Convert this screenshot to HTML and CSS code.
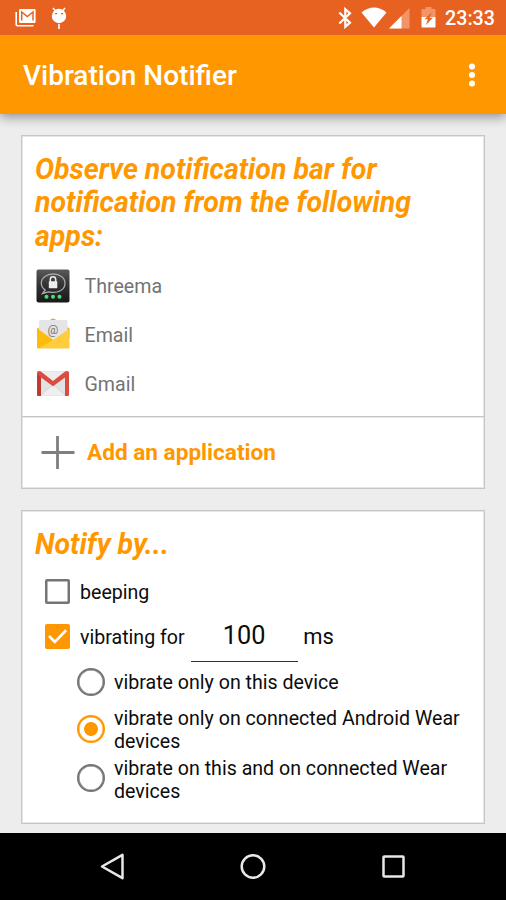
FILE: index.html
```html
<!DOCTYPE html>
<html lang="en">
<head>
<meta charset="utf-8">
<title>Vibration Notifier</title>
<link rel="stylesheet" href="styles.css">
</head>
<body>
<div class="screen">
  <header class="status">
    <svg class="notif-gmail" width="22" height="20" viewBox="0 0 22 20"><path d="M1.200 4v12.500q0 1.300 1.300 1.300H18.500" fill="none" stroke="#fff" stroke-width="1.600"/><rect x="4" y="1" width="16.600" height="14" rx="1.300" fill="#fff"/><path d="M6.700 12.500V4l5.600 4.500L18 4v8.500" fill="none" stroke="#e76120" stroke-width="1.500"/></svg>
    <svg class="notif-droid" width="16" height="23" viewBox="0 0 16 23"><circle cx="8" cy="9" r="7.200" fill="#fff"/><path d="M2 1l2.500 3M14 1l-2.500 3M8 17v5" stroke="#fff" stroke-width="1.600"/><path d="M4 6.700h2.200M10 6.700h2.200" stroke="#e76120" stroke-width="1.300"/></svg>
    <span class="spacer"></span>
    <svg class="bluetooth" width="14" height="22" viewBox="0 0 14 22"><path d="M1.300 5.500L12 15.700l-4.700 4.100V2.200L12 6.300 1.300 16.500" fill="none" stroke="#fff" stroke-width="2.200"/></svg>
    <svg class="wifi" width="26" height="21" viewBox="0 0 26 21"><path d="M0.500 5.500Q13-4.500 25.500 5.500L13 20.500Z" fill="#fff"/></svg>
    <svg class="signal" width="21" height="21" viewBox="0 0 21 21"><path d="M0 20.500L20.500 0v20.500Z" fill="#f19568"/><path d="M0 20.500L12.500 8v12.500Z" fill="#fff"/></svg>
    <svg class="battery" width="15" height="21" viewBox="0 0 15 21"><path d="M1.500 2h3V0h6v2h3q1 0 1 1v7H.5V3q0-1 1-1Z" fill="#f19568"/><path d="M.5 10h14v9.500q0 1-1 1h-12q-1 0-1-1Z" fill="#fff"/><path d="M11 5L3.700 12.200h3.200L5 18l6.800-7.200H8.500Z" fill="#e76120"/></svg>
    <time class="clock">23:33</time>
  </header>
  <div class="appbar">
    <h1>Vibration Notifier</h1>
    <svg width="8" height="24" viewBox="0 0 8 24" fill="#fff"><circle cx="4" cy="3.500" r="3"/><circle cx="4" cy="12" r="3"/><circle cx="4" cy="20.500" r="3"/></svg>
  </div>
  <main>
    <section class="card apps">
      <h2>Observe notification bar for notification from the following apps:</h2>
      <ul>
        <li><svg width="34" height="34" viewBox="0 0 34 34"><defs><linearGradient id="dark" x2="0" y2="1"><stop stop-color="#5a5a5a"/><stop offset=".45" stop-color="#343434"/><stop offset="1" stop-color="#181818"/></linearGradient></defs><rect x=".5" y=".5" width="33" height="33" rx="2" fill="url(#dark)"/><path d="M9.200 21L6.500 24.500l6-1.700C22 25.200 29 20.500 29 14.200 29 8.500 23.500 5 17.200 5S5.300 8.800 5.300 14.200q0 4.200 3.900 6.800Z" fill="none" stroke="#a9a9b2" stroke-width="1.300"/><path d="M14.300 13v-2.500q0-2.700 2.700-2.700t2.700 2.700V13" fill="none" stroke="#eee" stroke-width="1.500"/><rect x="12.800" y="12.300" width="8.500" height="6.900" rx=".5" fill="#eee"/><g fill="#4be06f"><circle cx="10.500" cy="27.700" r="2"/><circle cx="17" cy="27.700" r="2"/><circle cx="23.500" cy="27.700" r="2"/></g></svg>Threema</li>
        <li><svg width="34" height="34" viewBox="0 0 34 34"><path d="M1 11.500Q1 10 3 9.500L14.500 1.500q2.500-2 5 0L32 9.500q1.500 .5 1.500 2V20H1Z" fill="#f9a825"/><rect x="3" y="2" width="28.500" height="23" rx="1.500" fill="#e5e5e5"/><path d="M1 10.500l16.200 11.500L33.500 10.500v18.500q0 1.500-1.500 1.500H2.500Q1 30.500 1 29Z" fill="#ffcc3c"/><path d="M1 10.500l16.200 11.500L2 30.500q-1-.3-1-1.500Z" fill="#fdbb0c"/><text x="17" y="15.500" text-anchor="middle" class="at">@</text></svg>Email</li>
        <li><svg width="34" height="34" viewBox="0 0 34 34"><rect x="1" y="4" width="32" height="25" rx="1.500" fill="#e2e2e2"/><path d="M4.500 28.500L17 17.500l12.500 11" fill="#efefef" stroke="#cfcfcf" stroke-width=".7"/><path d="M4.500 4.500h25L17 14.500Z" fill="#ececec"/><path d="M1 6V27.500q0 1.500 1.500 1.500H5V10.500l12 8.800L29 10.500v18.500h2.500q1.500 0 1.500-1.500V6q0-2-2-2-1.200 0-2.500 1L17 14 5.500 5Q4.200 4 3 4 1 4 1 6Z" fill="#dc4b3f"/><path d="M1.500 7l3.500 3.500v18.500H2.500Q1 29 1 27.500Z" fill="#bf3930"/></svg>Gmail</li>
      </ul>
      <div class="add"><svg width="34" height="34" viewBox="0 0 34 34"><path d="M.5 16.500h33M16.500 0v33" stroke="#7f7f7f" stroke-width="2.800"/></svg>Add an application</div>
    </section>
    <section class="card notify">
      <h2>Notify by...</h2>
      <div class="row check beep"><span class="box"></span><span>beeping</span></div>
      <div class="row check vib"><span class="box on"><svg width="25" height="25" viewBox="0 0 26 26"><path d="M4.200 12.500l6 6L22 6.500" fill="none" stroke="#fff" stroke-width="2.700"/></svg></span><span>vibrating for</span><span class="field">100</span><span class="unit">ms</span></div>
      <div class="row radio first"><span class="ring"></span><span>vibrate only on this device</span></div>
      <div class="row radio"><span class="ring on"></span><span class="two">vibrate only on connected Android Wear devices</span></div>
      <div class="row radio"><span class="ring"></span><span class="two">vibrate on this and on connected Wear devices</span></div>
    </section>
  </main>
  <nav>
    <svg width="28" height="28" viewBox="0 0 28 28"><path d="M23.500 1.800v23.400L3 13.500Z"/></svg>
    <svg width="28" height="28" viewBox="0 0 28 28"><circle cx="14" cy="13.500" r="11.300"/></svg>
    <svg width="28" height="28" viewBox="0 0 28 28"><rect x="4.500" y="3.500" width="20" height="20" rx=".8"/></svg>
  </nav>
</div>
</body>
</html>
```
FILE: styles.css
```css
* { box-sizing: border-box; }
body { margin: 0; font-family: Roboto, sans-serif; color: #0c0c0c; }
.screen { width: 506px; height: 900px; display: flex; flex-direction: column; background: #ededed; overflow: hidden; }
svg { display: block; flex: none; }
h1, h2, ul { margin: 0; padding: 0; }

.status { position: relative; z-index: 1; height: 35px; flex: none; display: flex; align-items: flex-start; background: #e76120; padding: 7px 11px 0 15px; }
.notif-gmail { margin-top: 1px; }
.notif-droid { margin-left: 14px; }
.spacer { flex: 1; }
.wifi { margin: 0 0 0 9px; }
.signal { margin: 1px 0 0 2px; }
.battery { margin-left: 11px; }
.clock { margin-left: 9px; font-size: 19.7px; line-height: 24px; font-weight: 500; color: #fff; }

.appbar { height: 79px; flex: none; display: flex; align-items: center; justify-content: space-between; background: #ff9800; padding: 2px 30px 0 23px; box-shadow: 0 3px 11px rgba(0, 0, 0, .4); }
.appbar svg { margin-bottom: 2px; }
h1 { font-size: 28px; font-weight: 500; color: #fff; }

main { flex: 1; padding: 21px 21px 0; display: flex; flex-direction: column; gap: 21px; }
.card { background: #fff; border: 1px solid #c6c6c6; box-shadow: inset 0 0 0 1px #e6e6e6; }
h2 { font-size: 28.5px; line-height: 33.3px; font-style: italic; font-weight: 700; color: #ff9800; padding: 0 40px 0 13px; }
.apps { height: 354px; padding-top: 17px; display: flex; flex-direction: column; }
ul { list-style: none; margin-top: 9px; }
li { height: 49px; display: flex; align-items: center; gap: 15px; padding-left: 13.5px; font-size: 19.6px; color: #737373; }
.at { font-size: 12px; fill: #777; }
.add { flex: none; margin-top: auto; height: 72px; border-top: 1px solid #c6c6c6; box-shadow: inset 0 1px 0 #e6e6e6; display: flex; align-items: center; gap: 12px; padding-left: 19px; font-size: 22.6px; font-weight: 700; color: #ff9800; }

.notify { height: 314px; padding-top: 17px; }
.row { display: flex; align-items: center; font-size: 19.6px; line-height: 23px; }
.check { padding-left: 23px; gap: 10px; }
.beep { height: 45px; margin-top: 8px; }
.beep span + span { padding-top: 1px; }
.vib { height: 46px; }
.box { width: 25px; height: 25px; flex: none; border: 2.5px solid #757575; border-radius: 2px; box-shadow: inset 0 0 0 .5px #757575; }
.box.on { border: 0; background: #ff9800; margin-bottom: 2px; box-shadow: none; }
.field { width: 107px; height: 48px; margin: 2px 0 0 -4px; border-bottom: 1px solid #333; text-align: center; font-size: 25.3px; line-height: 44px; }
.unit { font-size: 22px; margin: 0 0 2px -4.500px; }
.radio { height: 49px; padding: 0 20px 0 55px; gap: 9px; }
.radio.first { height: 44px; }
.two { padding-top: 2px; }
.radio:last-child { padding-top: 1px; }
.radio:last-child .two { padding-top: 3px; }
.ring { width: 28px; height: 28px; flex: none; border: 2.5px solid #757575; border-radius: 50%; box-shadow: inset 0 0 0 .5px #757575; }
.ring.on { border-color: #ff9800; box-shadow: inset 0 0 0 .5px #ff9800; background: radial-gradient(circle, #ff9800 6.5px, transparent 7.3px); }

nav { height: 67px; flex: none; display: flex; justify-content: center; align-items: center; gap: 112px; background: #000; }
nav svg { fill: none; stroke: #e8e8e8; stroke-width: 2.5; stroke-linejoin: round; }
```
